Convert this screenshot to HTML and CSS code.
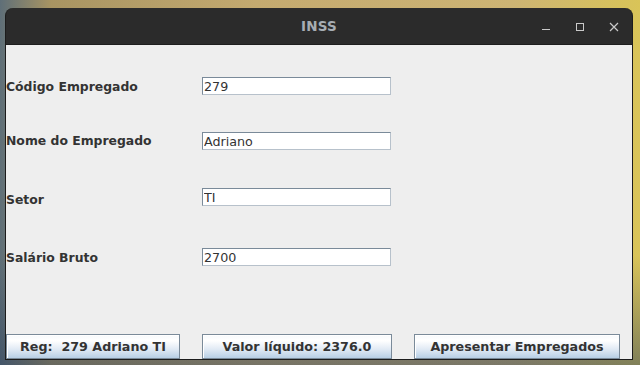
FILE: index.html
```html
<!DOCTYPE html>
<html lang="pt">
<head>
  <meta charset="UTF-8" />
  <title>INSS</title>
  <link rel="stylesheet" href="styles.css">
</head>
<body>

  <div class="window">
    <div class="titlebar">
      <div class="title">INSS</div>
      <div class="controls">
        <svg class="ctrl" width="10" height="10" viewBox="0 0 10 10"><line x1="1" y1="7.5" x2="9" y2="7.5" stroke="#c9c9c9" stroke-width="1"/></svg>
        <svg class="ctrl" width="10" height="10" viewBox="0 0 10 10"><rect x="1.5" y="1.5" width="7" height="7" fill="none" stroke="#c9c9c9" stroke-width="1"/></svg>
        <svg class="ctrl" width="10" height="10" viewBox="0 0 10 10"><path d="M1 1 L9 9 M9 1 L1 9" stroke="#c9c9c9" stroke-width="1.2"/></svg>
      </div>
    </div>

    <div class="content">
      <div class="form">
        <div class="row r1">
          <label>Código Empregado</label>
          <input type="text" value="279" />
        </div>
        <div class="row r2">
          <label>Nome do Empregado</label>
          <input type="text" value="Adriano" />
        </div>
        <div class="row r3">
          <label>Setor</label>
          <input type="text" value="TI" />
        </div>
        <div class="row r4">
          <label>Salário Bruto</label>
          <input type="text" value="2700" />
        </div>
      </div>

      <div class="buttons">
        <button class="b1">Reg:&nbsp; 279 Adriano TI</button>
        <button class="b2">Valor líquido: 2376.0</button>
        <button class="b3">Apresentar Empregados</button>
      </div>
    </div>
  </div>

</body>
</html>
```

FILE: styles.css
```css
* { margin: 0; padding: 0; box-sizing: border-box; }
html, body {
  width: 640px;
  height: 365px;
  overflow: hidden;
}
body {
  font-family: "DejaVu Sans", sans-serif;
  background:
    linear-gradient(to bottom, rgba(0,0,0,0) 70%, rgba(40,60,90,0.5) 100%),
    linear-gradient(to right, #5f6f78 0%, #a89462 8%, #c4aa70 40%, #cdb474 80%, #d9c458 100%);
  padding: 8px 7px 0 5px;
}
.window {
  width: 628px;
  height: 352px;
  border-radius: 8px 8px 0 0;
  background: #2b2b2b;
  border: 1px solid #1c1c1c;
  border-top: none;
  display: flex;
  flex-direction: column;
  overflow: hidden;
}
.titlebar {
  height: 37px;
  position: relative;
  display: flex;
  align-items: center;
  justify-content: center;
  border-bottom: 1px solid #1e1e1e;
}
.title {
  color: #a7adb3;
  font-weight: bold;
  font-size: 13.5px;
  letter-spacing: 0.2px;
}
.controls {
  position: absolute;
  right: 13px;
  top: 14px;
  display: flex;
  gap: 24px;
}
.ctrl {
  display: block;
}
.content {
  flex: 1;
  background: #eeeeee;
  display: flex;
  flex-direction: column;
  justify-content: space-between;
}
.form {
  display: flex;
  flex-direction: column;
  padding-top: 32px;
}
.row {
  display: flex;
  align-items: center;
  height: 18px;
}
.r2 { margin-top: 37px; }
.r3 { margin-top: 38px; }
.r4 { margin-top: 42px; }
label {
  width: 196px;
  font-weight: bold;
  font-size: 12.4px;
  color: #333333;
}
.r2 label { margin-top: -2px; }
.r3 label { margin-top: 4px; }
input[type="text"] {
  width: 189px;
  height: 18px;
  font-family: "DejaVu Sans", sans-serif;
  font-size: 12.7px;
  color: #333333;
  background: #ffffff;
  border: 1px solid #7a8a99;
  border-right-color: #b7c1cb;
  border-bottom-color: #b7c1cb;
  padding: 0 1px;
  outline: none;
}
.buttons {
  display: flex;
  gap: 22px;
  height: 25px;
}
button {
  height: 25px;
  font-family: "DejaVu Sans", sans-serif;
  font-weight: bold;
  font-size: 12.7px;
  color: #333333;
  border: 1px solid #7a8a99;
  background: linear-gradient(to bottom, #f6f9fc 0%, #ffffff 25%, #e2ebf5 60%, #b8cfe5 100%);
  box-shadow: inset 1px 1px 0 #ffffff;
}
.b1 { width: 174px; }
.b2 { width: 190px; }
.b3 { width: 206px; }
```
